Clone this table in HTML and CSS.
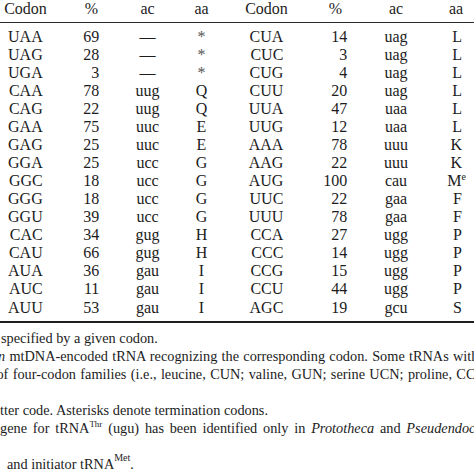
FILE: index.html
```html
<!DOCTYPE html>
<html>
<head>
<meta charset="utf-8">
<link rel="stylesheet" href="styles.css">
</head>
<body>
<div class="page">
  <div class="thead grid">
    <div class="h">Codon</div>
    <div class="h h-pct">%</div>
    <div class="h">ac</div>
    <div class="h">aa</div>
    <div class="h">Codon</div>
    <div class="h">%</div>
    <div class="h">ac</div>
    <div class="h h-aa2">aa</div>
  </div>
  <div class="tbody grid">
    <div class="c1">UAA</div><div class="c2">69</div><div class="c3">—</div><div class="c4 star">*</div><div class="c5">CUA</div><div class="c6">14</div><div class="c7">uag</div><div class="c8">L</div>
    <div class="c1">UAG</div><div class="c2">28</div><div class="c3">—</div><div class="c4 star">*</div><div class="c5">CUC</div><div class="c6">3</div><div class="c7">uag</div><div class="c8">L</div>
    <div class="c1">UGA</div><div class="c2">3</div><div class="c3">—</div><div class="c4 star">*</div><div class="c5">CUG</div><div class="c6">4</div><div class="c7">uag</div><div class="c8">L</div>
    <div class="c1">CAA</div><div class="c2">78</div><div class="c3">uug</div><div class="c4">Q</div><div class="c5">CUU</div><div class="c6">20</div><div class="c7">uag</div><div class="c8">L</div>
    <div class="c1">CAG</div><div class="c2">22</div><div class="c3">uug</div><div class="c4">Q</div><div class="c5">UUA</div><div class="c6">47</div><div class="c7">uaa</div><div class="c8">L</div>
    <div class="c1">GAA</div><div class="c2">75</div><div class="c3">uuc</div><div class="c4">E</div><div class="c5">UUG</div><div class="c6">12</div><div class="c7">uaa</div><div class="c8">L</div>
    <div class="c1">GAG</div><div class="c2">25</div><div class="c3">uuc</div><div class="c4">E</div><div class="c5">AAA</div><div class="c6">78</div><div class="c7">uuu</div><div class="c8">K</div>
    <div class="c1">GGA</div><div class="c2">25</div><div class="c3">ucc</div><div class="c4">G</div><div class="c5">AAG</div><div class="c6">22</div><div class="c7">uuu</div><div class="c8">K</div>
    <div class="c1">GGC</div><div class="c2">18</div><div class="c3">ucc</div><div class="c4">G</div><div class="c5">AUG</div><div class="c6">100</div><div class="c7">cau</div><div class="c8">M<sup class="mark">e</sup></div>
    <div class="c1">GGG</div><div class="c2">18</div><div class="c3">ucc</div><div class="c4">G</div><div class="c5">UUC</div><div class="c6">22</div><div class="c7">gaa</div><div class="c8">F</div>
    <div class="c1">GGU</div><div class="c2">39</div><div class="c3">ucc</div><div class="c4">G</div><div class="c5">UUU</div><div class="c6">78</div><div class="c7">gaa</div><div class="c8">F</div>
    <div class="c1">CAC</div><div class="c2">34</div><div class="c3">gug</div><div class="c4">H</div><div class="c5">CCA</div><div class="c6">27</div><div class="c7">ugg</div><div class="c8">P</div>
    <div class="c1">CAU</div><div class="c2">66</div><div class="c3">gug</div><div class="c4">H</div><div class="c5">CCC</div><div class="c6">14</div><div class="c7">ugg</div><div class="c8">P</div>
    <div class="c1">AUA</div><div class="c2">36</div><div class="c3">gau</div><div class="c4">I</div><div class="c5">CCG</div><div class="c6">15</div><div class="c7">ugg</div><div class="c8">P</div>
    <div class="c1">AUC</div><div class="c2">11</div><div class="c3">gau</div><div class="c4">I</div><div class="c5">CCU</div><div class="c6">44</div><div class="c7">ugg</div><div class="c8">P</div>
    <div class="c1">AUU</div><div class="c2">53</div><div class="c3">gau</div><div class="c4">I</div><div class="c5">AGC</div><div class="c6">19</div><div class="c7">gcu</div><div class="c8">S</div>
  </div>
  <div class="notes">
    <div class="line l1">specified by a given codon.</div>
    <div class="line l2"><i>n</i> mtDNA-encoded tRNA recognizing the corresponding codon. Some tRNAs without</div>
    <div class="line l3">of four-codon families (i.e., leucine, CUN; valine, GUN; serine UCN; proline, CCN</div>
    <div class="line blank">&nbsp;</div>
    <div class="line l4">tter code. Asterisks denote termination codons.</div>
    <div class="line l5">gene for tRNA<sup class="s">Thr</sup> (ugu) has been identified only in <i>Prototheca</i> and <i>Pseudendoclonium</i></div>
    <div class="line blank">&nbsp;</div>
    <div class="line l6">and initiator tRNA<sup class="s s2">Met</sup>.</div>
  </div>
</div>
</body>
</html>
```
FILE: styles.css
```css
html, body {
  margin: 0;
  padding: 0;
  background: #ffffff;
}
body {
  width: 474px;
  height: 474px;
  overflow: hidden;
  font-family: "Liberation Serif", "Times New Roman", serif;
  color: #1c1c1c;
}
.page {
  width: 474px;
}
.grid {
  display: grid;
  grid-template-columns: 51px 69px 55px 53px 77px 61px 60px 48px;
}
.thead {
  font-size: 16px;
  line-height: 18px;
  padding-bottom: 4px;
  border-bottom: 1.5px solid #2a2a2a;
}
.h {
  text-align: center;
}
.h-pct {
  padding-left: 12px;
}
.h-aa2 {
  padding-left: 12px;
}
.tbody {
  font-size: 16px;
  line-height: 18.05px;
  padding-top: 4.8px;
  padding-bottom: 4.2px;
  border-bottom: 2.5px solid #1e1e1e;
}
.c1 { text-align: right; padding-right: 8.3px; }
.c2 { text-align: right; padding-right: 20.7px; }
.c3 { text-align: center; }
.c4 { text-align: center; }
.c5 { text-align: right; padding-right: 21.7px; }
.c6 { text-align: right; padding-right: 18.7px; }
.c7 { text-align: center; }
.c8 { text-align: right; padding-right: 12px; }
.star {
  color: #555;
}
.mark {
  font-size: 10px;
  line-height: 0;
  vertical-align: 6px;
  margin-right: -4px;
}
.notes {
  margin-top: 6.5px;
  font-size: 14.3px;
  line-height: 18px;
}
.line {
  white-space: nowrap;
}
.l1 { padding-left: 1px; }
.l2 { margin-left: -2px; word-spacing: 0.7px; }
.l3 { margin-left: -3.6px; word-spacing: 0.8px; }
.l4 { margin-left: 0; }
.l5 { margin-left: 0; word-spacing: 2.2px; }
.l6 { padding-left: 7px; }
.s {
  font-size: 9px;
  line-height: 0;
  vertical-align: 6px;
}
.s2 {
  font-size: 10px;
  vertical-align: 8px;
}
```
